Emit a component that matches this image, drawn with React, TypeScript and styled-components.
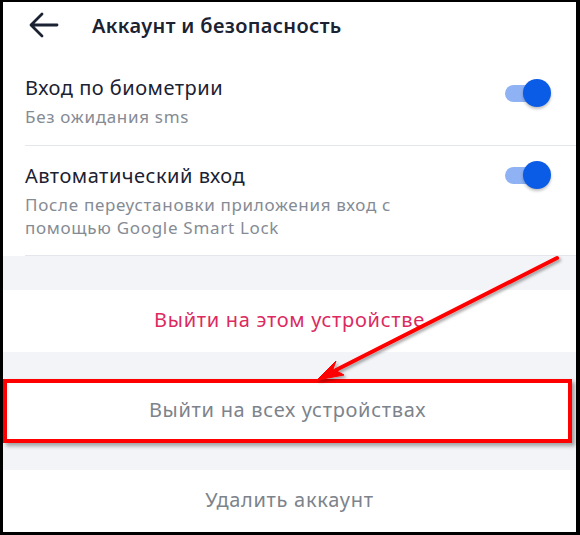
import React from 'react'
import styled, { createGlobalStyle } from 'styled-components'

const GlobalStyle = createGlobalStyle`
  html, body {
    margin: 0;
    padding: 0;
    background: #000;
  }
  body {
    font-family: 'Noto Sans', 'Open Sans', sans-serif;
  }
`

const Frame = styled.div`
  position: relative;
  box-sizing: border-box;
  width: 580px;
  height: 535px;
  padding: 2px 4px 3px 3px;
  background: #000;
`

const Screen = styled.div`
  display: flex;
  flex-direction: column;
  height: 100%;
  background: #f2f4f7;
  overflow: hidden;
`

const Header = styled.div`
  display: flex;
  align-items: center;
  gap: 33px;
  height: 46px;
  padding-left: 24px;
  background: #fff;
`

const Title = styled.h1`
  margin: 0;
  font-size: 20px;
  font-weight: 600;
  color: #1b2232;
  letter-spacing: 0.35px;
`

const Settings = styled.div`
  background: #fff;
  padding-left: 22px;
`

const Row = styled.div<{ $top: number; $bottom: number }>`
  display: flex;
  align-items: flex-start;
  justify-content: space-between;
  padding: ${(p) => p.$top}px 25px ${(p) => p.$bottom}px 0;
  border-bottom: 1px solid #e3e6eb;
`

const RowText = styled.div`
  display: flex;
  flex-direction: column;
  gap: 4px;
`

const RowTitle = styled.div`
  font-size: 20px;
  line-height: 26px;
  letter-spacing: 0.5px;
  color: #1b2232;
`

const RowHint = styled.div`
  font-size: 17px;
  line-height: 23px;
  letter-spacing: 0.7px;
  color: #858b94;
  max-width: 400px;
`

const Toggle = styled.div<{ $shift: number }>`
  position: relative;
  width: 46px;
  height: 28px;
  margin-top: ${(p) => p.$shift}px;
  flex-shrink: 0;
`

const Track = styled.div`
  position: absolute;
  left: 0;
  top: 6px;
  width: 40px;
  height: 17px;
  border-radius: 9px;
  background: #8eb2f4;
`

const Knob = styled.div`
  position: absolute;
  right: 0;
  top: 0;
  width: 28px;
  height: 28px;
  border-radius: 50%;
  background: #0a5be6;
  box-shadow: 0 2px 3px rgba(0, 0, 0, 0.25);
`

const Gap = styled.div<{ $h: number }>`
  height: ${(p) => p.$h}px;
  flex-shrink: 0;
`

const Action = styled.div<{ $danger?: boolean; $marked?: boolean }>`
  display: flex;
  align-items: center;
  justify-content: center;
  box-sizing: border-box;
  height: ${(p) => (p.$marked ? 64 : 62)}px;
  margin: ${(p) => (p.$marked ? '-1px 4px -1px 0' : '0')};
  padding-bottom: 3px;
  background: #fff;
  border: ${(p) => (p.$marked ? '4px solid #ff0000' : 'none')};
  box-shadow: ${(p) => (p.$marked ? '3px 3px 4px rgba(0,0,0,0.35)' : 'none')};
  font-size: 20px;
  letter-spacing: 0.7px;
  color: ${(p) => (p.$danger ? '#dc2a5f' : '#7d838b')};
`

const Overlay = styled.svg`
  position: absolute;
  left: 0;
  top: 0;
  pointer-events: none;
`

const BackIcon = () => (
  <svg width="32" height="28" viewBox="0 0 32 28">
    <path
      d="M30 14H5M15 3L4 14l11 11"
      fill="none"
      stroke="#1b2232"
      strokeWidth="2.8"
      strokeLinecap="round"
      strokeLinejoin="round"
    />
  </svg>
)

const Switch = ({ shift }: { shift: number }) => (
  <Toggle $shift={shift}>
    <Track />
    <Knob />
  </Toggle>
)

export default function App() {
  return (
    <>
      <GlobalStyle />
      <Frame>
        <Screen>
          <Header>
            <BackIcon />
            <Title>Аккаунт и безопасность</Title>
          </Header>
          <Settings>
            <Row $top={27} $bottom={17}>
              <RowText>
                <RowTitle>Вход по биометрии</RowTitle>
                <RowHint>Без ожидания sms</RowHint>
              </RowText>
              <Switch shift={4} />
            </Row>
            <Row $top={17} $bottom={16}>
              <RowText>
                <RowTitle>Автоматический вход</RowTitle>
                <RowHint>После переустановки приложения вход с помощью Google Smart Lock</RowHint>
              </RowText>
              <Switch shift={-2} />
            </Row>
          </Settings>
          <Gap $h={34} />
          <Action $danger>Выйти на этом устройстве</Action>
          <Gap $h={28} />
          <Action $marked>Выйти на всех устройствах</Action>
          <Gap $h={28} />
          <Action>Удалить аккаунт</Action>
        </Screen>
        <Overlay width="580" height="535" viewBox="0 0 580 535">
          <defs>
            <filter id="sh" x="-10%" y="-10%" width="130%" height="130%">
              <feDropShadow dx="2" dy="2" stdDeviation="1.5" floodColor="#000" floodOpacity="0.35" />
            </filter>
          </defs>
          <g filter="url(#sh)" fill="#ff0000" stroke="#ff0000">
            <line x1="557" y1="258" x2="336" y2="370" strokeWidth="4" strokeLinecap="round" />
            <path d="M317 380 L336 361 L333 369 L344 375 Z" strokeWidth="1" strokeLinejoin="round" />
          </g>
        </Overlay>
      </Frame>
    </>
  )
}
